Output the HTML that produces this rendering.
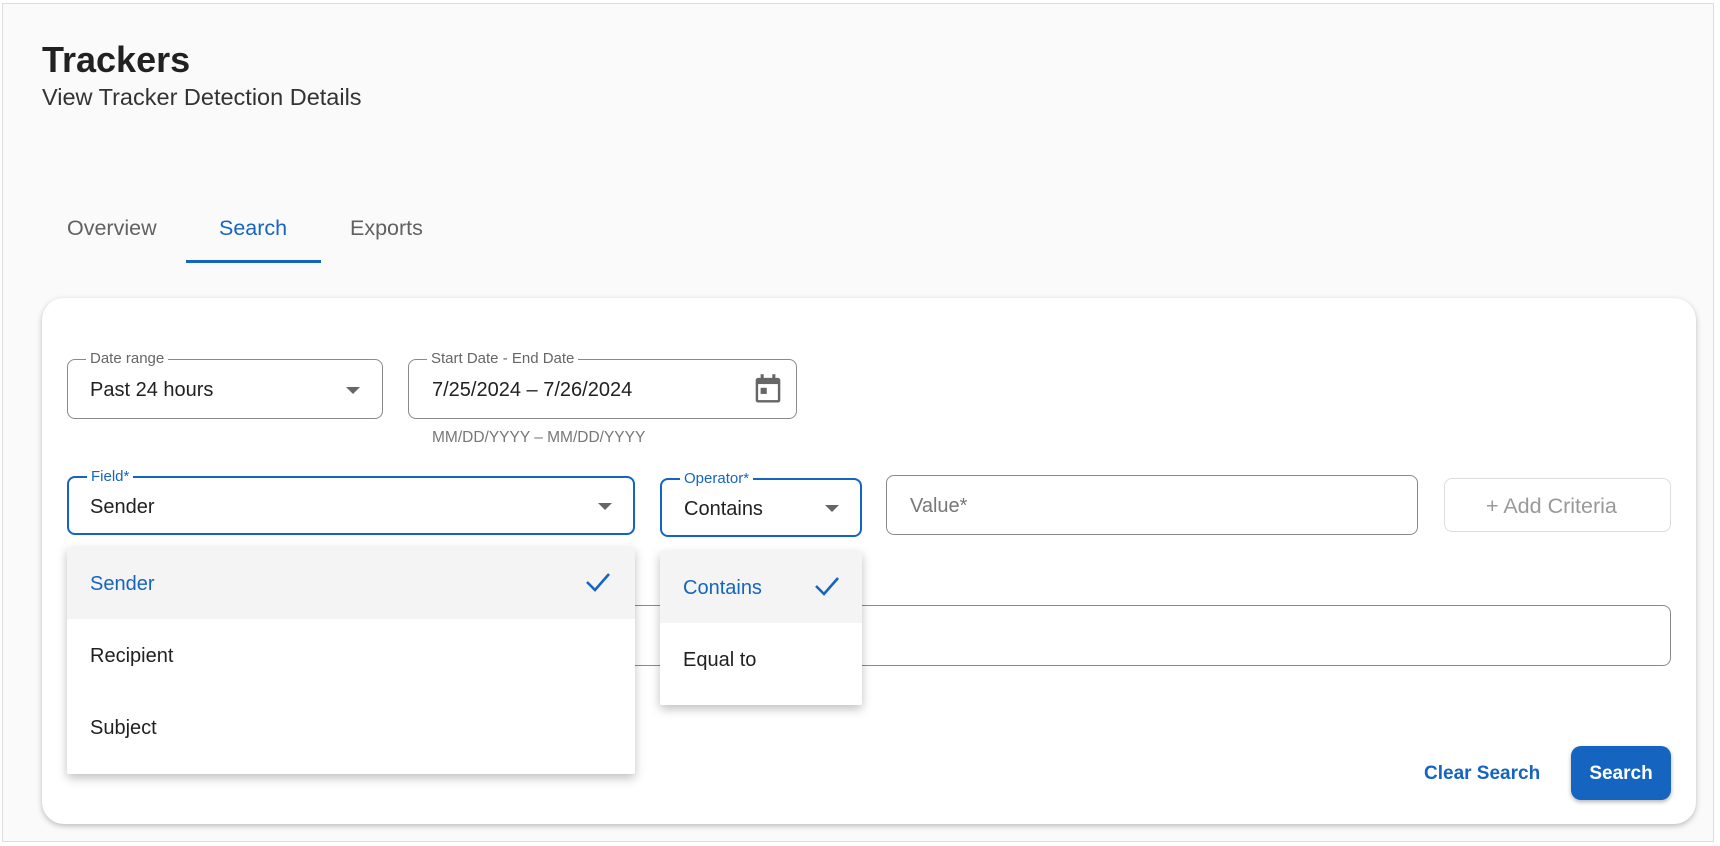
<!DOCTYPE html>
<html><head><meta charset="utf-8"><style>
*{box-sizing:border-box;margin:0;padding:0}
body{width:1720px;height:846px;background:#fff;font-family:"Liberation Sans",Arial,sans-serif;position:relative;overflow:hidden;color:#212121}
.page{position:absolute;left:2px;top:3px;width:1712px;height:839px;background:#fafafa;border:1px solid #ddd}
.a{position:absolute;white-space:nowrap}
.f{position:absolute;border:1px solid #8a8a8a;border-radius:8px;background:#fff}
.lab{position:absolute;top:-10px;font-size:15px;color:#666;background:#fff;padding:0 4px;line-height:18px}
.blue{border:2px solid #1565c0}
.blue .lab{color:#1565c0}
.val{position:absolute;font-size:20px;color:#212121}
.tri{position:absolute;width:0;height:0;border-left:7px solid transparent;border-right:7px solid transparent;border-top:7px solid #666}
.menu{position:absolute;background:#fff;box-shadow:0 4px 10px rgba(0,0,0,.25);border-radius:2px}
.it{position:relative;height:72px;font-size:20px;line-height:74px;padding-left:23px;color:#212121}
.it.sel{background:#f4f4f4;color:#1565c0}
</style></head><body>
<div class="page">
<div class="a" style="left:39px;top:35px;font-size:36px;font-weight:bold;color:#212121">Trackers</div>
<div class="a" style="left:39px;top:80px;font-size:23.5px;color:#333">View Tracker Detection Details</div>
<div class="a" style="left:64px;top:212px;font-size:21.5px;color:#616161">Overview</div>
<div class="a" style="left:216px;top:212px;font-size:21.5px;color:#1565c0">Search</div>
<div class="a" style="left:347px;top:212px;font-size:21.5px;color:#616161">Exports</div>
<div class="a" style="left:183px;top:256px;width:135px;height:3px;background:#1565c0"></div>
</div>
<div class="a" style="left:42px;top:298px;width:1654px;height:526px;background:#fff;border-radius:22px;box-shadow:0 2px 6px rgba(0,0,0,.25)"></div>

<div class="f" style="left:67px;top:359px;width:316px;height:60px"><span class="lab" style="left:18px">Date range</span><span class="val" style="left:22px;top:19px">Past 24 hours</span><span class="tri" style="left:278px;top:27px"></span></div>
<div class="f" style="left:408px;top:359px;width:389px;height:60px"><span class="lab" style="left:18px">Start Date - End Date</span><span class="val" style="left:23px;top:19px">7/25/2024 – 7/26/2024</span>
<svg style="position:absolute;left:344px;top:13px" width="30" height="32" viewBox="0 0 24 26"><rect x="2" y="4" width="20" height="20" rx="2" fill="#666"/><rect x="4" y="9" width="16" height="13" fill="#fff"/><rect x="6" y="1" width="2.5" height="5" fill="#666"/><rect x="15.5" y="1" width="2.5" height="5" fill="#666"/><rect x="6" y="12" width="5" height="5" fill="#666"/></svg></div>
<div class="a" style="left:432px;top:429px;font-size:15.5px;color:#777">MM/DD/YYYY – MM/DD/YYYY</div>

<div class="f blue" style="left:67px;top:476px;width:568px;height:59px"><span class="lab" style="left:18px">Field*</span><span class="val" style="left:21px;top:18px">Sender</span><span class="tri" style="left:529px;top:25px"></span></div>
<div class="f blue" style="left:660px;top:478px;width:202px;height:59px"><span class="lab" style="left:18px">Operator*</span><span class="val" style="left:22px;top:18px">Contains</span><span class="tri" style="left:163px;top:25px"></span></div>
<div class="f" style="left:886px;top:475px;width:532px;height:60px"><span class="val" style="left:23px;top:19px;color:#777">Value*</span></div>
<div class="f" style="left:1444px;top:478px;width:227px;height:54px;border-color:#ddd"><span class="val" style="left:41px;top:15px;color:#999;font-size:21.5px">+ Add Criteria</span></div>
<div class="f" style="left:67px;top:605px;width:1604px;height:61px"></div>

<div class="menu" style="left:67px;top:547px;width:568px;height:227px">
<div class="it sel">Sender<svg style="position:absolute;right:24px;top:24px" width="26" height="22" viewBox="0 0 26 22"><path d="M2 11 L10 19 L24 3" fill="none" stroke="#1565c0" stroke-width="2.6"/></svg></div>
<div class="it">Recipient</div><div class="it">Subject</div></div>
<div class="menu" style="left:660px;top:551px;width:202px;height:154px">
<div class="it sel">Contains<svg style="position:absolute;right:22px;top:24px" width="26" height="22" viewBox="0 0 26 22"><path d="M2 11 L10 19 L24 3" fill="none" stroke="#1565c0" stroke-width="2.6"/></svg></div>
<div class="it">Equal to</div></div>

<div class="a" style="left:1424px;top:763px;font-size:19px;font-weight:bold;color:#1565c0">Clear Search</div>
<div class="a" style="left:1571px;top:746px;width:100px;height:54px;background:#1565c0;border-radius:10px;color:#fff;font-size:19px;font-weight:bold;text-align:center;line-height:56px;box-shadow:0 2px 4px rgba(0,0,0,.3)">Search</div>
</body></html>
